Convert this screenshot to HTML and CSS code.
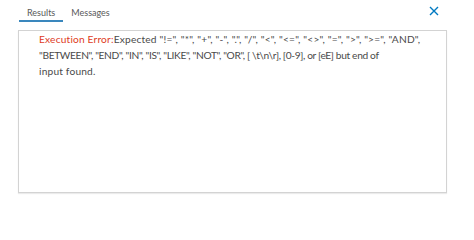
FILE: index.html
```html
<!DOCTYPE html>
<html lang="en">
<head>
<meta charset="utf-8">
<title>Results</title>
<link rel="stylesheet" href="styles.css">
</head>
<body>
<div class="panel">
  <div class="header">
    <nav class="tabs">
      <span class="tab active">Results</span>
      <span class="tab">Messages</span>
    </nav>
    <button class="close" aria-label="Close">
      <svg width="10" height="10" viewBox="0 0 10 10"><path d="M1 1 L9 9 M9 1 L1 9" stroke="#0079c1" stroke-width="1.4" fill="none"/></svg>
    </button>
  </div>
  <div class="output">
    <span class="err">Execution Error:</span>Expected "!=", "*", "+", "-", ".", "/", "&lt;", "&lt;=", "&lt;&gt;", "=", "&gt;", "&gt;=", "AND",<br><span class="l2">"BETWEEN", "END", "IN", "IS", "LIKE", "NOT", "OR", [ \t\n\r], [0-9], or [eE] but end of</span><br>input found.
  </div>
</div>
</body>
</html>
```
FILE: styles.css
```css
html, body {
  margin: 0;
  padding: 0;
  background: #fff;
}
body {
  font-family: Lato, "Open Sans", sans-serif;
  color: #4c4c4c;
}
.panel {
  width: 474px;
  height: 203px;
}
.header {
  display: flex;
  align-items: flex-start;
  justify-content: space-between;
  padding: 0 35px 0 19px;
  height: 23px;
}
.tabs {
  display: flex;
}
.tab {
  font-size: 9px;
  line-height: 13px;
  padding: 6px 8px 1px;
  color: #595959;
  border-bottom: 2px solid transparent;
}
.tab.active {
  border-bottom-color: #3a87bd;
}
.close {
  border: 0;
  background: none;
  padding: 0;
  margin-top: 6px;
  width: 10px;
  height: 10px;
  display: flex;
}
.output {
  margin: 7px 27px 0 18px;
  height: 161px;
  border: 1px solid #d3d3d3;
  box-shadow: 0 1px 1px rgba(0,0,0,0.08);
  padding: 0 10px 0 20px;
  font-size: 10.2px;
  line-height: 16px;
  white-space: nowrap;
  letter-spacing: 0.18px;
  color: #4a4a4a;
}
.l2 {
  letter-spacing: -0.35px;
}
.err {
  color: #de3b1e;
}
```
